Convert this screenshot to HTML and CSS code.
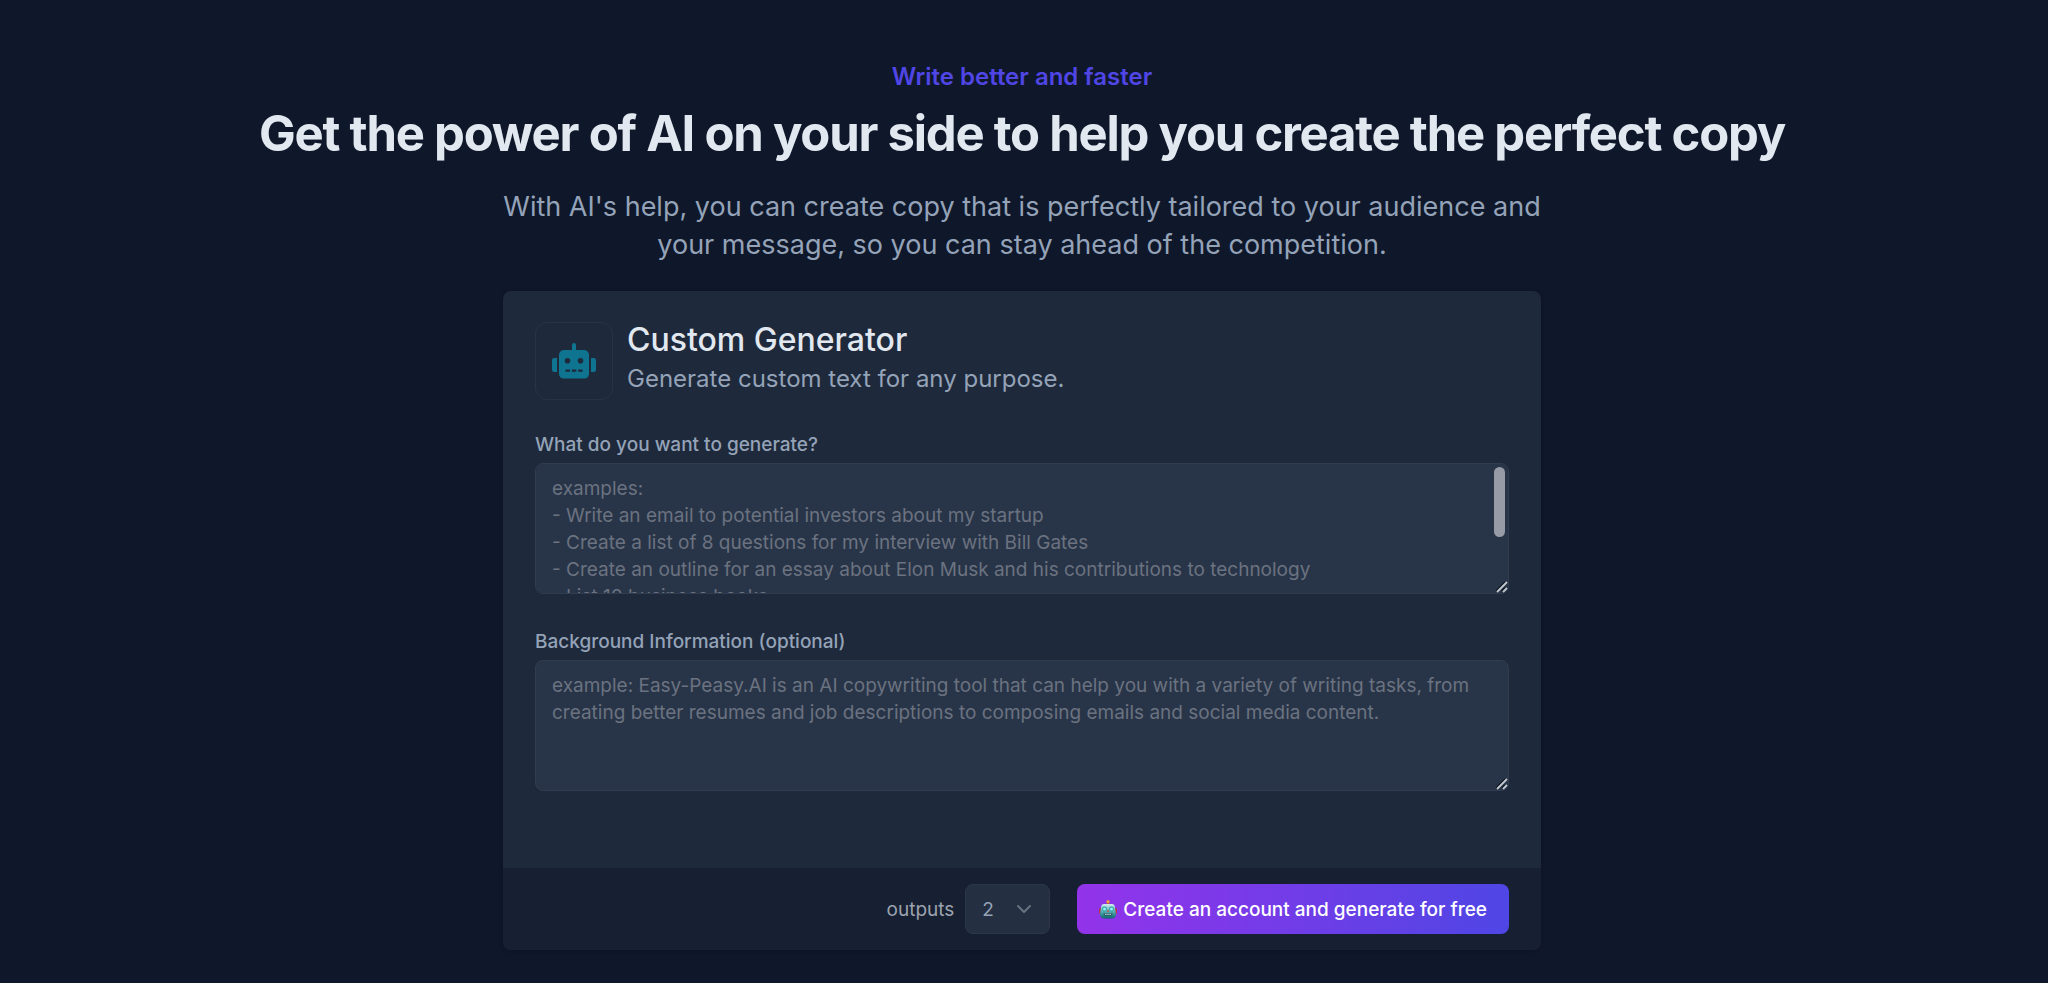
FILE: index.html
```html
<!DOCTYPE html>
<html lang="en">
<head>
    <meta charset="UTF-8">
    <meta name="viewport" content="width=device-width, initial-scale=1.0">
    <title>Custom Generator</title>
    <link rel="stylesheet" href="styles.css">
</head>
<body>
    <main class="page">
        <header class="intro">
            <p class="eyebrow">Write better and faster</p>
            <h1>Get the power of AI on your side to help you create the perfect copy</h1>
            <p class="lead">With AI's help, you can create copy that is perfectly tailored to your audience and your message, so you can stay ahead of the competition.</p>
        </header>

        <form class="card">
            <div class="card-body">
                <div class="card-head">
                    <div class="icon-box">
                        <svg class="robot" viewBox="0 0 44 36" aria-hidden="true">
                            <path fill="#0e7490" fill-rule="evenodd" d="M22 0a2 2 0 0 1 2 2v5h8a5 5 0 0 1 5 5v19a4.500 4.500 0 0 1-4.500 4.500h-21A4.500 4.500 0 0 1 7 31V12a5 5 0 0 1 5-5h8V2a2 2 0 0 1 2-2zM15.500 15a2.800 2.800 0 1 0 0 5.600a2.800 2.800 0 0 0 0-5.600zM28.500 15a2.800 2.800 0 1 0 0 5.600a2.800 2.800 0 0 0 0-5.600zM13.500 26.500v2.200h4.500v-2.200zM19.800 26.500v2.200h4.500v-2.200zM26.100 26.500v2.200h4.500v-2.200z"/>
                            <path fill="#0e7490" d="M2.200 15H5v14H2.200A2.200 2.200 0 0 1 0 26.800v-9.600A2.200 2.200 0 0 1 2.200 15zM39 15h2.800a2.200 2.200 0 0 1 2.200 2.200v9.600a2.200 2.200 0 0 1-2.200 2.200H39z"/>
                        </svg>
                    </div>
                    <div>
                        <h2>Custom Generator</h2>
                        <p class="subtitle">Generate custom text for any purpose.</p>
                    </div>
                </div>

                <div class="field">
                    <label for="prompt">What do you want to generate?</label>
                    <div class="textbox">
                        <textarea id="prompt" placeholder="examples:
- Write an email to potential investors about my startup
- Create a list of 8 questions for my interview with Bill Gates
- Create an outline for an essay about Elon Musk and his contributions to technology
- List 10 business books
- Write a short story"></textarea>
                        <span class="thumb"></span>
                        <svg class="grip" viewBox="0 0 12 12" aria-hidden="true">
                            <path d="M0 10L9 1M6 10l3-3" stroke="#0b1220" stroke-width="1.500"/>
                            <path d="M1 11L11 1M7 11l4-4" stroke="#c3c8cf" stroke-width="1.800"/>
                        </svg>
                    </div>
                </div>

                <div class="field">
                    <label for="background">Background Information (optional)</label>
                    <div class="textbox">
                        <textarea id="background" placeholder="example: Easy-Peasy.AI is an AI copywriting tool that can help you with a variety of writing tasks, from creating better resumes and job descriptions to composing emails and social media content."></textarea>
                        <svg class="grip" viewBox="0 0 12 12" aria-hidden="true">
                            <path d="M0 10L9 1M6 10l3-3" stroke="#0b1220" stroke-width="1.500"/>
                            <path d="M1 11L11 1M7 11l4-4" stroke="#c3c8cf" stroke-width="1.800"/>
                        </svg>
                    </div>
                </div>
            </div>

            <div class="card-footer">
                <label class="outputs-label" for="outputs">outputs</label>
                <div class="select">
                    <select id="outputs">
                        <option>1</option>
                        <option selected>2</option>
                        <option>3</option>
                    </select>
                    <svg class="chevron" viewBox="0 0 16 10" aria-hidden="true">
                        <path d="M2 2l6 6 6-6" fill="none" stroke="#6b7280" stroke-width="2" stroke-linecap="round" stroke-linejoin="round"/>
                    </svg>
                </div>
                <button type="button" class="generate">
                    <svg class="bot" viewBox="0 0 18 19" aria-hidden="true">
                        <defs>
                            <linearGradient id="face" x1="0" y1="0" x2="0" y2="1">
                                <stop offset="0" stop-color="#d5eeee"/>
                                <stop offset="0.450" stop-color="#62b9bf"/>
                                <stop offset="1" stop-color="#08686c"/>
                            </linearGradient>
                        </defs>
                        <path d="M8 2h2v3H8z" fill="#b9433b"/>
                        <circle cx="9" cy="1.800" r="1.700" fill="#f19a3e"/>
                        <rect x="0" y="8" width="3" height="6" rx="1.500" fill="#b6353f"/>
                        <rect x="15" y="8" width="3" height="6" rx="1.500" fill="#b6353f"/>
                        <path d="M5 4h8q3 0 3 4l1 6q0 4-4 4.500H5Q1 18 1 14l1-6q0-4 3-4z" fill="url(#face)"/>
                        <circle cx="5.500" cy="9" r="2.400" fill="#2b98a3"/>
                        <circle cx="12.500" cy="9" r="2.400" fill="#2b98a3"/>
                        <circle cx="5.500" cy="9" r="1.500" fill="#8ffcf7"/>
                        <circle cx="12.500" cy="9" r="1.500" fill="#8ffcf7"/>
                        <path d="M9 9.500l1.200 2.300H7.800z" fill="#d0443f"/>
                        <path d="M4.500 13.200h9q0 2.800-2.500 2.800H7q-2.500 0-2.500-2.800z" fill="#285f6a"/>
                        <path d="M6 14.300h6" stroke="#d4eded" stroke-dasharray="1.500 .7"/>
                    </svg>
                    Create an account and generate for free
                </button>
            </div>
        </form>
    </main>
</body>
</html>
```
FILE: styles.css
```css
* {
    box-sizing: border-box;
}

body {
    margin: 0;
    min-height: 100vh;
    background: #0f172a;
    color: #94a3b8;
    font-family: Inter, "Liberation Sans", sans-serif;
    font-size: 19px;
    line-height: 27px;
}

h1, h2, p {
    margin: 0;
}

.page {
    padding: 58px 36px 32px 32px;
}

.intro {
    text-align: center;
}

.eyebrow {
    color: #4f46e5;
    font-size: 24px;
    font-weight: 600;
    line-height: 38px;
}

h1 {
    margin-top: 11px;
    color: #e2e8f0;
    font-size: 49px;
    font-weight: 700;
    line-height: 54px;
    letter-spacing: -0.025em;
}

.lead {
    max-width: 1040px;
    margin: 27px auto 0;
    font-size: 27px;
    line-height: 38px;
}

.card {
    max-width: 1038px;
    margin: 27px auto 0;
    background: #1e293b;
    border-radius: 8px;
    box-shadow: 0 1px 4px rgba(0, 0, 0, 0.2);
    overflow: hidden;
}

.card-body {
    padding: 31px 32px 77px;
}

.card-head {
    display: flex;
    gap: 14px;
    margin-bottom: 31px;
}

.icon-box {
    display: flex;
    align-items: center;
    justify-content: center;
    width: 78px;
    height: 78px;
    border: 1px solid #283446;
    border-radius: 12px;
}

.robot {
    width: 44px;
    height: 36px;
}

h2 {
    color: #e2e8f0;
    font-size: 32px;
    font-weight: 500;
    line-height: 36px;
}

.subtitle {
    margin-top: 2px;
    font-size: 24px;
    line-height: 38px;
}

.field + .field {
    margin-top: 34px;
}

.field label {
    display: block;
    margin-bottom: 5px;
    font-weight: 500;
}

.textbox {
    position: relative;
}

textarea {
    display: block;
    width: 100%;
    height: 131px;
    padding: 11px 16px;
    background: #283548;
    border: 1px solid #313d4f;
    border-radius: 8px;
    color: #cbd5e1;
    font: inherit;
    resize: none;
}

textarea::placeholder {
    color: #6b7280;
    opacity: 1;
}

.thumb {
    position: absolute;
    top: 4px;
    right: 4px;
    width: 11px;
    height: 70px;
    background: #969ba6;
    border-radius: 6px;
}

.grip {
    position: absolute;
    right: 1px;
    bottom: 1px;
    width: 12px;
    height: 12px;
}

.card-footer {
    display: flex;
    align-items: center;
    justify-content: flex-end;
    padding: 16px 32px;
    background: #172032;
}

.outputs-label {
    margin-right: 11px;
    color: #9ca3af;
}

.select {
    position: relative;
    width: 85px;
    margin-right: 27px;
}

select {
    width: 100%;
    height: 50px;
    padding: 0 16px;
    appearance: none;
    background: #242f41;
    border: 1px solid #2c3748;
    border-radius: 8px;
    color: #94a3b8;
    font: inherit;
}

.chevron {
    position: absolute;
    top: 20px;
    right: 18px;
    width: 16px;
    height: 10px;
    pointer-events: none;
}

.generate {
    display: flex;
    align-items: center;
    gap: 6px;
    height: 50px;
    padding: 0 22px;
    background: linear-gradient(to right, #9333ea, #4f46e5);
    border: 0;
    border-radius: 8px;
    color: #fff;
    font: inherit;
    font-weight: 500;
    white-space: nowrap;
    cursor: pointer;
}

.bot {
    width: 18px;
    height: 19px;
}
```
